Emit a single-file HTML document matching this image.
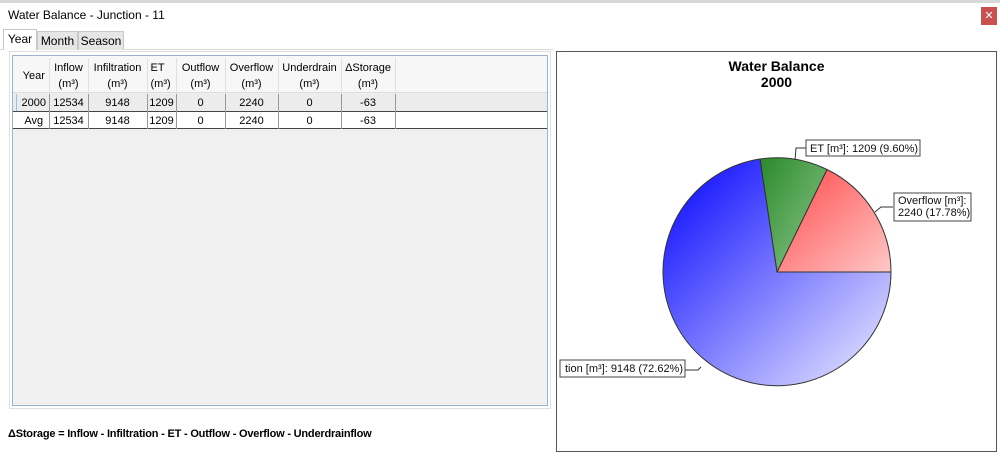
<!DOCTYPE html>
<html><head><style>
*{margin:0;padding:0;box-sizing:border-box}
body{width:1000px;height:455px;background:#fff;font-family:"Liberation Sans",sans-serif;position:relative;overflow:hidden;color:#000}
.abs{position:absolute}
.title{left:8px;top:8px;font-size:12px}
.close{left:981px;top:7px;width:16px;height:18px;background:#c9504f;color:#fff;font-size:11px;text-align:center;line-height:18px}
.tab{top:31px;height:19px;font-size:12px;line-height:18px;text-align:center;border:1px solid #c8c8c8;border-bottom:none;background:#e6e6e6}
table{border-collapse:collapse;font-size:11px}
td{border-right:1px solid #999;text-align:center;padding:0;height:17px;line-height:16px}
</style></head><body>
<div class="abs" style="left:0;top:0;width:1000px;height:3px;background:#d8d8d8"></div>
<div class="abs title">Water Balance - Junction - 11</div>
<div class="abs close">✕</div>
<div class="abs" style="left:0;top:49px;width:553px;height:1px;background:#dcdcdc"></div>
<div class="abs tab" style="left:3px;top:29px;width:34px;height:21px;background:#fff">Year</div>
<div class="abs tab" style="left:37px;width:41px">Month</div>
<div class="abs tab" style="left:78px;width:46px">Season</div>
<div class="abs" style="left:9px;top:51px;width:542px;height:358px;border:1px solid #e0e0e0"></div>
<div class="abs" style="left:12px;top:55px;width:536px;height:351px;border:1px solid #9bb3cc;background:#f0f0f0"></div>
<div class="abs" style="left:13px;top:56px;width:534px;height:37px;background:#f7f7f7;border-bottom:1px solid #ddd"></div>
<div class="abs" style="left:13px;top:94px;width:534px;height:18px;background:#ececec;border-bottom:1px solid #444"></div>
<div class="abs" style="left:13px;top:112px;width:534px;height:17px;background:#fff;border-bottom:1px solid #444"></div>
<div class="abs" style="left:16px;top:94px;width:1px;height:17px;background:#9bc0e0"></div>
<table class="abs" style="left:19px;top:58px;font-size:11px">
<tr style="height:36px"><td style="width:30px;border-right:1px solid #e0e0e0">Year</td><td style="width:39px;border-right:1px solid #e0e0e0">Inflow<br>(m³)</td><td style="width:59px;border-right:1px solid #e0e0e0">Infiltration<br>(m³)</td><td style="width:29px;border-right:1px solid #e0e0e0;text-align:left;padding-left:3px">ET<br>(m³)</td><td style="width:49px;border-right:1px solid #e0e0e0">Outflow<br>(m³)</td><td style="width:53px;border-right:1px solid #e0e0e0">Overflow<br>(m³)</td><td style="width:63px;border-right:1px solid #e0e0e0">Underdrain<br>(m³)</td><td style="width:54px;border-right:1px solid #e0e0e0">ΔStorage<br>(m³)</td></tr>
<tr style="height:18px"><td>2000</td><td>12534</td><td>9148</td><td>1209</td><td>0</td><td>2240</td><td>0</td><td>-63</td></tr>
<tr style="height:17px"><td>Avg</td><td>12534</td><td>9148</td><td>1209</td><td>0</td><td>2240</td><td>0</td><td>-63</td></tr>
</table>
<div class="abs" style="left:8px;top:428px;font-size:11px;font-weight:bold;letter-spacing:-0.2px">ΔStorage = Inflow - Infiltration - ET - Outflow - Overflow - Underdrainflow</div>
<div class="abs" style="left:556px;top:51px;width:441px;height:401px;border:1px solid #555;background:#fff"></div>
<div class="abs" style="left:556px;top:58px;width:441px;text-align:center;font-size:14px;font-weight:bold;line-height:16px">Water Balance<br>2000</div>
<svg class="abs" style="left:0;top:0" width="1000" height="455">
<defs>
<linearGradient id="b" x1="0" y1="0" x2="1" y2="1"><stop offset="0" stop-color="#0000ff"/><stop offset="1" stop-color="#f0f0ff"/></linearGradient>
<linearGradient id="g" x1="0" y1="0" x2="1" y2="1"><stop offset="0" stop-color="#2a8a2a"/><stop offset="1" stop-color="#90c890"/></linearGradient>
<linearGradient id="r" x1="0" y1="0" x2="1" y2="1"><stop offset="0" stop-color="#ff4848"/><stop offset="1" stop-color="#ffc8c8"/></linearGradient>
</defs>
<g stroke="#333" stroke-width="1">
<path d="M777 272 L891 272 A114 114 0 0 0 827 169.5 Z" fill="url(#r)"/>
<path d="M777 272 L827 169.5 A114 114 0 0 0 760 159 Z" fill="url(#g)"/>
<path d="M777 272 L760 159 A114 114 0 1 0 891 272 Z" fill="url(#b)"/>
<polyline points="795,160 796,148 806,148" fill="none"/>
<polyline points="875,212 881,207 893,207" fill="none"/>
<polyline points="701,367 698,370 685,370" fill="none"/>
</g>
<g font-family="Liberation Sans" font-size="11" fill="#111">
<rect x="806" y="140" width="114" height="16" fill="#fff" stroke="#444"/>
<text x="810" y="152">ET [m³]: 1209 (9.60%)</text>
<rect x="894" y="193" width="77" height="28" fill="#fff" stroke="#444"/>
<text x="898" y="204">Overflow [m³]:</text><text x="898" y="216">2240 (17.78%)</text>
<rect x="560" y="360" width="125" height="17" fill="#fff" stroke="#444"/>
<text x="565" y="372">tion [m³]: 9148 (72.62%)</text>
</g>
</svg>
</body></html>
